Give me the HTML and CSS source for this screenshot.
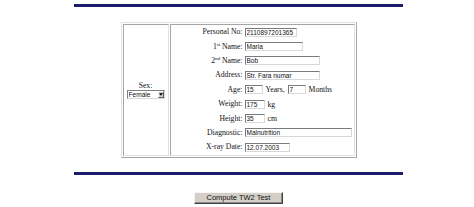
FILE: index.html
```html
<!DOCTYPE html>
<html>
<head>
<meta charset="utf-8">
<title>TW2 Test</title>
<link rel="stylesheet" href="styles.css">
</head>
<body>
<div class="page">
  <div class="bar"></div>
  <form class="panel">
    <div class="cell sex-cell">
      <label class="sex-label" for="sex">Sex:</label>
      <span class="select">
        <select id="sex"><option>Female</option><option>Male</option></select>
        <span class="arrow"><svg width="5" height="3" viewBox="0 0 5 3"><path d="M0 0H5L2.5 3Z" fill="#000"/></svg></span>
      </span>
    </div>
    <div class="cell data-cell">
      <label class="lbl">Personal No:</label>
      <div class="val"><input class="txt w-pn" value="2110897201365"></div>
      <label class="lbl">1<sup>st</sup> Name:</label>
      <div class="val"><input class="txt w-first" value="Maria"></div>
      <label class="lbl">2<sup>nd</sup> Name:</label>
      <div class="val"><input class="txt w-second" value="Bob"></div>
      <label class="lbl">Address:</label>
      <div class="val"><input class="txt w-addr" value="Str. Fara numar"></div>
      <label class="lbl">Age:</label>
      <div class="val"><input class="txt w-age" value="15"><span>Years,</span><input class="txt w-age" value="7"><span>Months</span></div>
      <label class="lbl">Weight:</label>
      <div class="val"><input class="txt w-num" value="175"><span>kg</span></div>
      <label class="lbl">Height:</label>
      <div class="val"><input class="txt w-num" value="35"><span>cm</span></div>
      <label class="lbl">Diagnostic:</label>
      <div class="val"><input class="txt w-diag" value="Malnutrition"></div>
      <label class="lbl">X-ray Date:</label>
      <div class="val"><input class="txt w-date" value="12.07.2003"></div>
    </div>
  </form>
  <div class="bar bar-bottom"></div>
  <div class="actions"><button type="button" class="btn">Compute TW2 Test</button></div>
</div>
</body>
</html>
```
FILE: styles.css
```css
html, body {
  margin: 0;
  background: #fff;
}
body {
  font-family: "Liberation Serif", "Times New Roman", serif;
  font-size: 7.7px;
  color: #111;
}
.page {
  display: flex;
  flex-direction: column;
  align-items: center;
  padding: 4px 0 0 3px;
}
.bar {
  width: 329px;
  height: 3px;
  background: #1b1b6b;
}
.panel {
  margin: 15px 0 0;
  box-sizing: border-box;
  width: 236px;
  display: flex;
  gap: 1px;
  padding: 1px;
  border: 1px solid;
  border-color: #e2e2e2 #a6a6a6 #a6a6a6 #e2e2e2;
}
.cell {
  box-sizing: border-box;
  border: 1px solid;
  border-color: #a6a6a6 #e2e2e2 #e2e2e2 #a6a6a6;
}
.sex-cell {
  width: 46px;
  display: flex;
  flex-direction: column;
  align-items: center;
  justify-content: center;
  padding-top: 1px;
}
.sex-label {
  line-height: 7px;
}
.select {
  display: inline-flex;
  box-sizing: border-box;
  width: 38px;
  height: 9px;
  margin-top: 1px;
  border: 1px solid;
  border-color: #808080 #d8d8d8 #d8d8d8 #808080;
  background: #fff;
}
.select select {
  appearance: none;
  -webkit-appearance: none;
  flex: 1;
  min-width: 0;
  height: 100%;
  margin: 0;
  padding: 0 0 0 1px;
  border: 0;
  background: transparent;
  font: 6.6px "Liberation Sans", Arial, sans-serif;
  line-height: 7px;
  color: #111;
  outline: none;
}
.arrow {
  box-sizing: border-box;
  width: 6px;
  display: flex;
  align-items: center;
  justify-content: center;
  background: #d4d0c8;
  border: 1px solid;
  border-color: #f4f4f4 #606060 #606060 #f4f4f4;
}
.data-cell {
  width: 185px;
  display: grid;
  grid-template-columns: 72px auto;
  grid-auto-rows: 14.4px;
  column-gap: 2px;
  align-items: center;
}
.lbl {
  text-align: right;
  white-space: nowrap;
  line-height: 8px;
}
.lbl sup {
  font-size: 5px;
  line-height: 0;
  vertical-align: 3px;
}
.val {
  display: flex;
  align-items: center;
  gap: 3px;
  white-space: nowrap;
}
.txt {
  box-sizing: border-box;
  height: 9px;
  margin: 0;
  padding: 0 1px;
  border: 1px solid;
  border-color: #7a7a7a #d8d8d8 #d8d8d8 #7a7a7a;
  background: #fff;
  font: 6.5px "Liberation Sans", Arial, sans-serif;
  color: #111;
  outline: none;
}
.w-pn { width: 52px; }
.w-first { width: 58px; }
.w-second { width: 75px; }
.w-addr { width: 75px; }
.w-age { width: 18px; }
.w-num { width: 20px; }
.w-diag { width: 107px; }
.w-date { width: 45px; }
.bar-bottom {
  margin-top: 14px;
}
.actions {
  margin-top: 17px;
  display: flex;
  justify-content: center;
}
.btn {
  box-sizing: border-box;
  width: 89px;
  height: 12px;
  margin: 0;
  padding: 0;
  background: #d4d0c8;
  border: 1px solid;
  border-color: #f6f6f6 #404040 #404040 #f6f6f6;
  box-shadow: inset -1px -1px 0 #8a8a8a;
  font: 7.5px "Liberation Sans", Arial, sans-serif;
  color: #111;
  line-height: 10px;
}
```
